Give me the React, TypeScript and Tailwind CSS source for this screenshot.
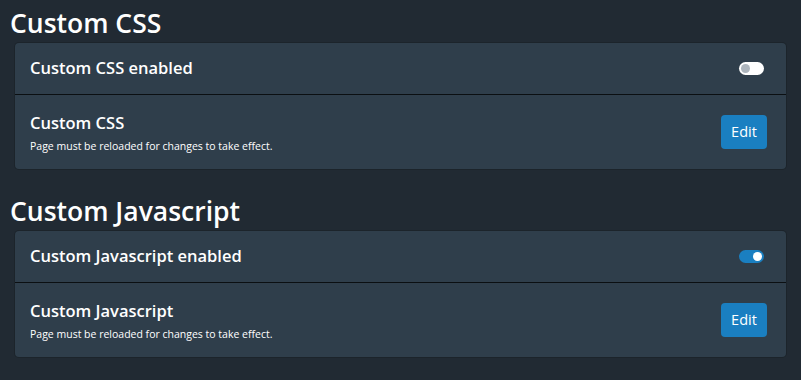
function Toggle({ on }: { on: boolean }) {
  return (
    <div
      className={
        on
          ? "flex h-[13px] w-[25px] items-center justify-end rounded-full bg-[#1a7fc1] px-[2px]"
          : "flex h-[13px] w-[25px] items-center justify-start rounded-full bg-white px-[2px]"
      }
    >
      <div className={on ? "h-[9px] w-[9px] rounded-full bg-white" : "h-[9px] w-[9px] rounded-full bg-[#adb5bd]"} />
    </div>
  );
}

function Section({ title, label, on }: { title: string; label: string; on: boolean }) {
  return (
    <section>
      <h2 className="px-[10px] text-[26.5px] font-semibold leading-[36px] text-white">{title}</h2>
      <div className="mx-[15px] mt-[2px] overflow-hidden rounded-[4px] bg-[#2f3e4b] shadow-[0_0_0_1px_#1c242b]">
        <div className="flex h-[52px] items-center justify-between border-b border-[#0b0f12] pl-[15px] pr-[22px]">
          <span className="text-[16.5px] font-semibold text-white">{label} enabled</span>
          <Toggle on={on} />
        </div>
        <div className="flex h-[74px] items-center justify-between pl-[15px] pr-[19px]">
          <div className="flex flex-col">
            <span className="text-[16.5px] font-semibold leading-[24px] text-white">{label}</span>
            <span className="mt-[4px] text-[10.5px] leading-[14px] text-white">
              Page must be reloaded for changes to take effect.
            </span>
          </div>
          <button className="h-[34px] w-[46px] rounded-[4px] bg-[#1a7fc1] text-[14.5px] text-white">Edit</button>
        </div>
      </div>
    </section>
  );
}

export default function App() {
  return (
    <main
      className="flex h-[380px] w-[801px] flex-col gap-[24px] bg-[#212a33] pt-[5px]"
      style={{ fontFamily: '"Open Sans", "Noto Sans", sans-serif' }}
    >
      <Section title="Custom CSS" label="Custom CSS" on={false} />
      <Section title="Custom Javascript" label="Custom Javascript" on={true} />
    </main>
  );
}
